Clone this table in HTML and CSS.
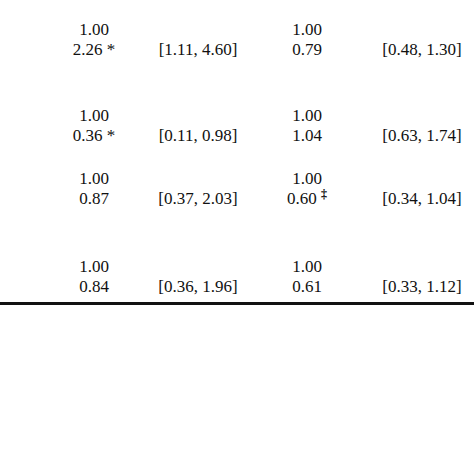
FILE: index.html
```html
<!DOCTYPE html>
<html lang="en">
  <head>
    <meta charset="UTF-8" />
    <meta name="viewport" content="width=device-width, initial-scale=1.0" />
    <title>Odds ratios</title>
    <link rel="stylesheet" href="styles.css">
  </head>
  <body>
    <div class="table-wrap">
      <table class="results">
        <colgroup>
          <col class="col-label" />
          <col class="col-or" />
          <col class="col-ci" />
          <col class="col-or2" />
          <col class="col-ci2" />
        </colgroup>
        <tbody>
          <tr class="first">
            <td></td>
            <td>1.00<br />2.26 *</td>
            <td class="ci">[1.11, 4.60]</td>
            <td>1.00<br />0.79</td>
            <td class="ci">[0.48, 1.30]</td>
          </tr>
          <tr class="tall">
            <td></td>
            <td>1.00<br />0.36 *</td>
            <td class="ci">[0.11, 0.98]</td>
            <td>1.00<br />1.04</td>
            <td class="ci">[0.63, 1.74]</td>
          </tr>
          <tr class="short">
            <td></td>
            <td>1.00<br />0.87</td>
            <td class="ci">[0.37, 2.03]</td>
            <td>1.00<br />0.60 <sup>‡</sup></td>
            <td class="ci">[0.34, 1.04]</td>
          </tr>
          <tr class="tall last">
            <td></td>
            <td>1.00<br />0.84</td>
            <td class="ci">[0.36, 1.96]</td>
            <td>1.00<br />0.61</td>
            <td class="ci">[0.33, 1.12]</td>
          </tr>
        </tbody>
      </table>
    </div>
  </body>
</html>
```

FILE: styles.css
```css
body {
  margin: 0;
  background-color: #fff;
  color: #111;
  font-family: "Liberation Serif", "Times New Roman", serif;
  font-size: 17px;
  line-height: 20px;
}

.table-wrap {
  border-bottom: 3px solid #111;
}

.results {
  width: 100%;
  table-layout: fixed;
  border-collapse: collapse;
}

.col-label {
  width: 44px;
}

.col-or {
  width: 100px;
}

.col-ci {
  width: 108px;
}

.col-or2 {
  width: 110px;
}

.results td {
  padding: 0;
  text-align: center;
  vertical-align: top;
  white-space: nowrap;
}

.results td.ci {
  vertical-align: bottom;
}

.results td:last-child {
  padding-left: 8px;
}

.first td {
  padding-top: 20px;
}

.tall td {
  padding-top: 46px;
}

.short td {
  padding-top: 23px;
}

.last td {
  padding-top: 48px;
  padding-bottom: 5px;
}

sup {
  font-size: 12px;
  font-weight: bold;
  line-height: 0;
  vertical-align: 6px;
}
```
